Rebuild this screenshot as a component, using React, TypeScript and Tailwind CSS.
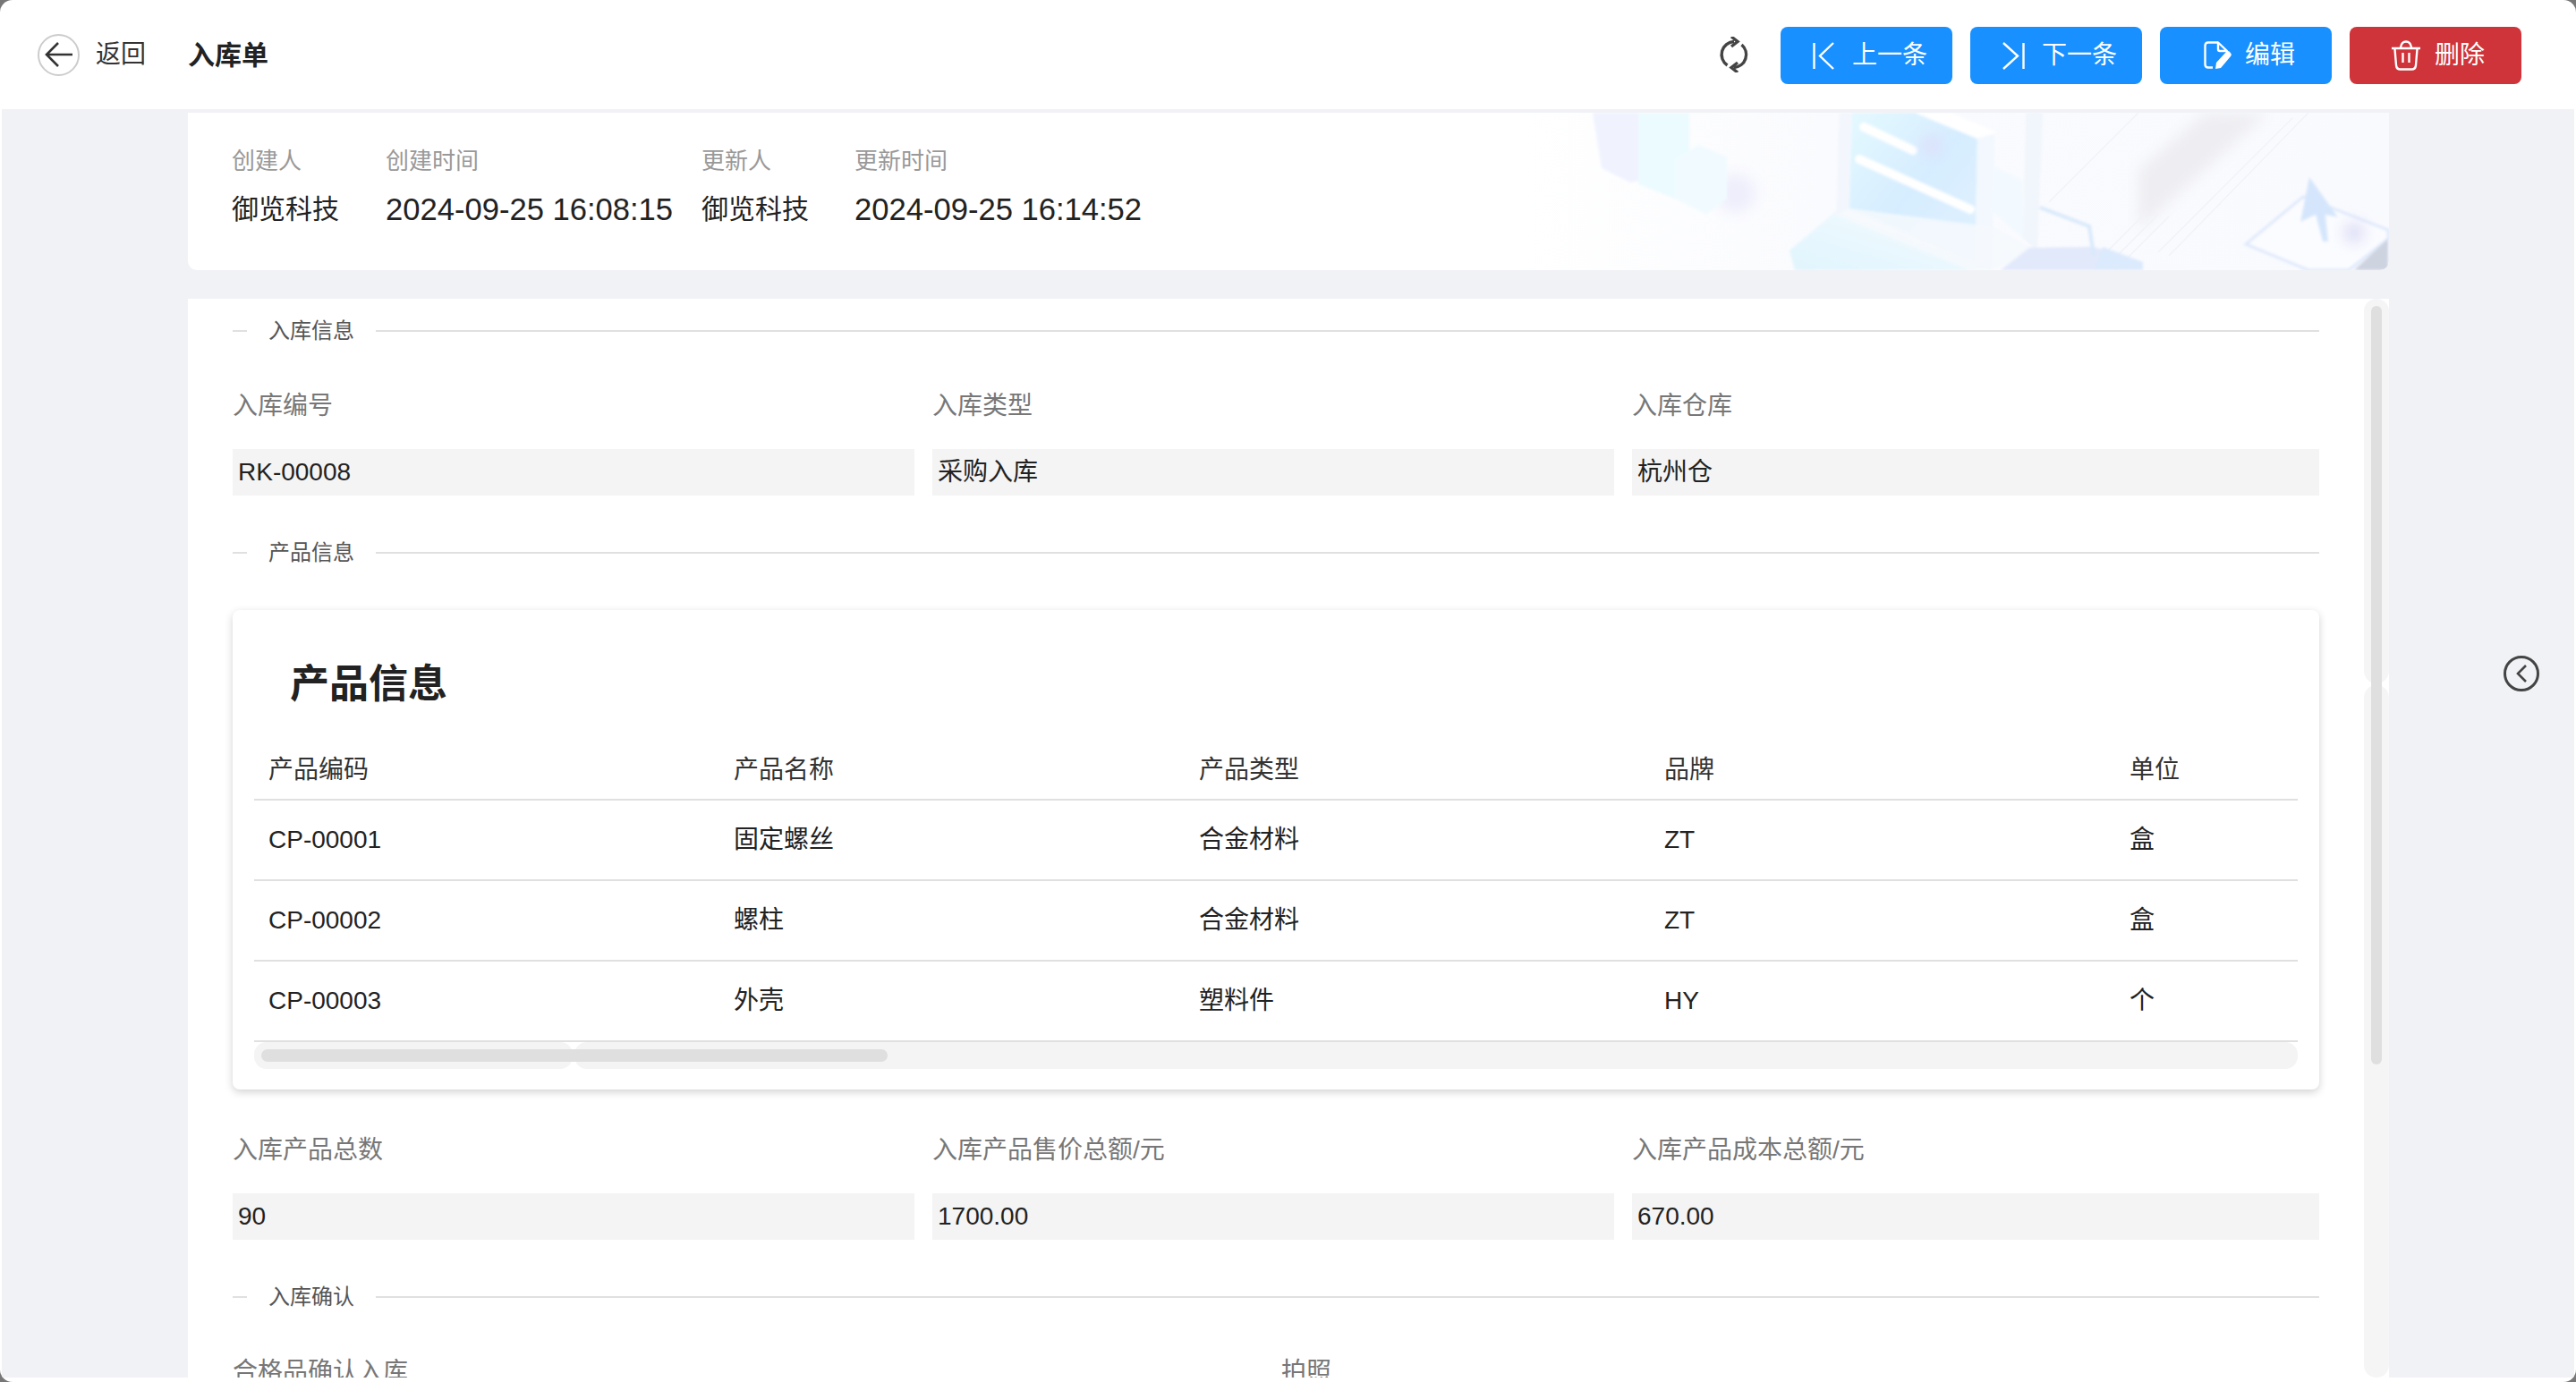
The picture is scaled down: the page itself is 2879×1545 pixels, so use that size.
import React from 'react'

const rows = [
  ['CP-00001', '固定螺丝', '合金材料', 'ZT', '盒'],
  ['CP-00002', '螺柱', '合金材料', 'ZT', '盒'],
  ['CP-00003', '外壳', '塑料件', 'HY', '个'],
]

function Section({ title }: { title: string }) {
  return (
    <div className="flex items-center h-[32px]">
      <div className="w-[16px] h-[2px] bg-[#e0e0e0]" />
      <span className="mx-[24px] text-[24px] text-[#555]">{title}</span>
      <div className="flex-1 h-[2px] bg-[#e0e0e0]" />
    </div>
  )
}

function Field({ label, value }: { label: string; value: string }) {
  return (
    <div>
      <div className="h-[40px] leading-[40px] text-[28px] text-[#777]">{label}</div>
      <div className="mt-[28px] h-[52px] leading-[52px] bg-[#f4f4f4] pl-[6px] text-[28px] text-[#222]">{value}</div>
    </div>
  )
}

function Meta({ label, value, date }: { label: string; value: string; date?: boolean }) {
  return (
    <div>
      <div className="h-[36px] leading-[36px] text-[26px] text-[#999]">{label}</div>
      <div className={date ? "mt-[16px] h-[40px] leading-[40px] text-[34.6px] text-[#222]" : "mt-[16px] h-[40px] leading-[40px] text-[30px] text-[#222]"}>{value}</div>
    </div>
  )
}

function HeroArt() {
  return (
    <svg className="absolute right-0 top-0" width="970" height="176" viewBox="0 0 970 176">
      <defs>
        <linearGradient id="base" x1="0" x2="1" y1="0" y2="0">
          <stop offset="0" stopColor="#ffffff" />
          <stop offset="0.35" stopColor="#fafbfe" />
          <stop offset="1" stopColor="#f9fafe" />
        </linearGradient>
        <linearGradient id="panel" x1="0" x2="1" y1="0" y2="1">
          <stop offset="0" stopColor="#e4f9ff" />
          <stop offset="0.5" stopColor="#d6edff" />
          <stop offset="1" stopColor="#e0f1ff" />
        </linearGradient>
        <linearGradient id="floor" x1="0" x2="1" y1="1" y2="0">
          <stop offset="0" stopColor="#e0f4fd" />
          <stop offset="1" stopColor="#f4fcff" />
        </linearGradient>
        <filter id="b2"><feGaussianBlur stdDeviation="1.4" /></filter>
        <filter id="b8"><feGaussianBlur stdDeviation="8" /></filter>
      </defs>
      <rect width="970" height="176" fill="url(#base)" />
      <g filter="url(#b8)">
        <polygon points="690,64 765,0 835,0 690,131" fill="#eeeef2" />
        <circle cx="240" cy="90" r="22" fill="#eeeefc" />
      </g>
      <g stroke="#f0f3f9" strokeWidth="1.5" fill="none">
        <path d="M712 156 L862 6 M724 160 L880 0 M590 100 L690 0" />
        <path d="M640 170 L700 110 M652 174 L712 114 M664 176 L724 116" />
      </g>
      <g filter="url(#b2)">
        <polygon points="80,0 131,0 131,76 122,78 90,62" fill="#f0f3fe" />
        <polygon points="131,0 188,0 188,96 172,96 131,80" fill="#ecfbff" />
        <polygon points="172,52 198,36 230,49 230,96 207,114 172,96" fill="#f1fbff" />
        <polygon points="300,154 351,111 510,170 512,176 306,176" fill="url(#floor)" />
        <polygon points="355,0 370,0 367,107 352,115" fill="#f3f7fd" />
        <polygon points="370,0 440,0 510,29 507,167 367,107" fill="url(#panel)" />
        <polygon points="440,0 480,0 532,22 510,29" fill="#ffffff" />
        <polygon points="510,29 529,24 526,176 507,176" fill="#f2f8fe" />
        <polygon points="564,0 583,0 577,155 561,140" fill="#f1f6fc" />
        <polygon points="529,60 561,76 561,140 526,110" fill="#f2faff" />
        <polygon points="352,115 367,107 530,128 577,155 577,160 520,176 500,176" fill="#f6f9fd" opacity="0.85" />
        <polygon points="536,176 568,151 640,150 695,167 695,176" fill="#e2e9fb" />
        <polygon points="640,176 650,150 695,167 695,176" fill="#dceafd" />
        <polyline points="580,106 635,127 640,160" fill="none" stroke="#d8e9fb" strokeWidth="4" />
        <line x1="383" y1="16" x2="438" y2="42" stroke="#ffffff" strokeWidth="10" strokeLinecap="round" />
        <line x1="378" y1="52" x2="502" y2="108" stroke="#ffffff" strokeWidth="10" strokeLinecap="round" />
        <polygon points="810,147 874,94 969,131 969,141 925,176 880,176" fill="#fbfcff" stroke="#dfe9fb" strokeWidth="3" />
        <polygon points="881,72 913,117 899,114 902,144 896,144 888,114 871,122" fill="#d5e6fc" />
        <polygon points="969,141 931,176 969,176" fill="#cdd3df" />
      </g>
      <g filter="url(#b8)">
        <circle cx="459" cy="37" r="12" fill="#dde0fb" />
        <circle cx="931" cy="134" r="12" fill="#dedef6" />
      </g>
    </svg>
  )
}

export default function App() {
  return (
    <div className="w-[2879px] h-[1545px] bg-[#777] font-['Liberation_Sans','Noto_Sans_CJK_SC',sans-serif]">
      <div className="relative flex flex-col h-full rounded-[14px] bg-white overflow-hidden pb-[5px]">
        {/* top bar */}
        <header className="h-[122px] shrink-0 flex items-center pl-[42px] pr-[61px]">
          <div className="w-[47px] h-[47px] rounded-full border-2 border-[#ccc] flex items-center justify-center">
            <svg width="32" height="28" viewBox="0 0 32 28" fill="none" stroke="#333" strokeWidth="2.6">
              <path d="M31 14 H2 M15 1 L2 14 L15 27" />
            </svg>
          </div>
          <span className="ml-[18px] text-[28px] text-[#333]">返回</span>
          <span className="ml-[47px] text-[30px] font-bold text-[#222]">入库单</span>
          <svg className="ml-auto mr-[32px]" width="40" height="40" viewBox="-20 -20 40 40" fill="none" stroke="#444" strokeWidth="3.4">
            <path d="M0 -14.5 A14.5 14.5 0 0 0 -7.5 12" />
            <path d="M8.5 -11 A14.5 14.5 0 0 1 0 14.5" />
            <path d="M-3 -20 L4 -14.5 L-3 -9" />
            <path d="M4 9 L-3 14.5 L4 20" />
          </svg>
          <div className="mt-[2px] flex gap-[20px] text-white text-[28px]">
            <button className="w-[192px] h-[64px] rounded-[8px] bg-[#1890ff] flex items-center pl-[36px]">
              <svg width="24" height="31" viewBox="0 0 24 31" fill="none" stroke="#fff" strokeWidth="2.4">
                <path d="M1.5 1 V30 M23 1 L8 15.5 L23 30" />
              </svg>
              <span className="ml-[20px]">上一条</span>
            </button>
            <button className="w-[192px] h-[64px] rounded-[8px] bg-[#1890ff] flex items-center pl-[36px]">
              <svg width="25" height="31" viewBox="0 0 25 31" fill="none" stroke="#fff" strokeWidth="2.4">
                <path d="M1 1 L17 15.5 L1 30 M23.5 1 V30" />
              </svg>
              <span className="ml-[19px]">下一条</span>
            </button>
            <button className="w-[192px] h-[64px] rounded-[8px] bg-[#1890ff] flex items-center pl-[49px]">
              <svg width="32" height="32" viewBox="0 0 32 32" fill="none" stroke="#fff" strokeWidth="2.4">
                <path d="M16 1.5 H5 Q1.5 1.5 1.5 5 V26 Q1.5 29.5 5 29.5 H10" />
                <path d="M16 1.5 V9 Q16 11 18 11 H26 L16 1.5 Z" strokeLinejoin="round" />
                <path d="M13 31 L14 24 L25 12 Q27 10 29 12 L30.5 14 Q31.5 15.5 30 17 L19 30 Z" fill="#fff" stroke="none" />
              </svg>
              <span className="ml-[14px]">编辑</span>
            </button>
            <button className="w-[192px] h-[64px] rounded-[8px] bg-[#cf343a] flex items-center pl-[46px]">
              <svg width="34" height="34" viewBox="0 0 34 34" fill="none" stroke="#fff" strokeWidth="2.4">
                <path d="M11 8 Q12 1.5 17 1.5 Q22 1.5 23 8 M1 9 H33" />
                <path d="M4.5 10 L6 28 Q6.5 32.5 10.5 32.5 H23.5 Q27.5 32.5 28 28 L29.5 10" />
                <path d="M13.5 14 V25 M20.5 14 V25" />
              </svg>
              <span className="ml-[15px]">删除</span>
            </button>
          </div>
        </header>

        {/* page body */}
        <main className="relative flex-1 min-h-0 mx-[2px] pt-[4px] pl-[208px] pr-[207px] bg-[#f0f2f6] flex flex-col gap-[32px]">
          <section className="relative h-[176px] shrink-0 bg-white rounded-b-[10px] overflow-hidden">
            <div className="relative pt-[36px] pl-[49px] grid grid-cols-[172px_353px_171px_auto]">
              <Meta label="创建人" value="御览科技" />
              <Meta label="创建时间" value="2024-09-25 16:08:15" date />
              <Meta label="更新人" value="御览科技" />
              <Meta label="更新时间" value="2024-09-25 16:14:52" date />
            </div>
            <HeroArt />
          </section>

          <section className="relative flex-1 min-h-0 bg-white overflow-hidden pt-[20px] pl-[50px] pr-[78px]">
            <Section title="入库信息" />
            <div className="mt-[48px] grid grid-cols-[762px_762px_768px] gap-x-[20px]">
              <Field label="入库编号" value="RK-00008" />
              <Field label="入库类型" value="采购入库" />
              <Field label="入库仓库" value="杭州仓" />
            </div>
            <div className="mt-[48px]"><Section title="产品信息" /></div>

            <div className="mt-[48px] h-[536px] rounded-[8px] bg-white px-[24px] pt-[53px] shadow-[0_3px_10px_rgba(0,0,0,0.18)]">
              <h3 className="pl-[40px] h-[60px] leading-[60px] text-[44px] font-bold text-[#222]">产品信息</h3>
              <div className="mt-[34px] h-[66px] grid grid-cols-[520px_520px_520px_520px_auto] items-center border-b-2 border-[#e0e0e0] pl-[16px] text-[28px] text-[#333]">
                <span>产品编码</span>
                <span>产品名称</span>
                <span>产品类型</span>
                <span>品牌</span>
                <span>单位</span>
              </div>
              {rows.map((r) => (
                <div key={r[0]} className="h-[90px] grid grid-cols-[520px_520px_520px_520px_auto] items-center border-b-2 border-[#e0e0e0] pl-[16px] text-[28px] text-[#222]">
                  {r.map((c, i) => <span key={i}>{c}</span>)}
                </div>
              ))}
              <div className="relative h-[30px] flex gap-[2px]">
                <div className="w-[356px] bg-[#f4f4f4] rounded-[14px]" />
                <div className="flex-1 bg-[#f4f4f4] rounded-[14px]" />
                <div className="absolute left-[8px] top-[8px] w-[700px] h-[14px] rounded-full bg-[#dfdfdf]" />
              </div>
            </div>

            <div className="mt-[48px] grid grid-cols-[762px_762px_768px] gap-x-[20px]">
              <Field label="入库产品总数" value="90" />
              <Field label="入库产品售价总额/元" value="1700.00" />
              <Field label="入库产品成本总额/元" value="670.00" />
            </div>
            <div className="mt-[48px]"><Section title="入库确认" /></div>
            <div className="mt-[48px] grid grid-cols-2 text-[28px] text-[#777] h-[40px] leading-[40px]">
              <span>合格品确认入库</span>
              <span className="pl-[6px]">拍照</span>
            </div>

            {/* vertical scrollbar */}
            <div className="absolute right-0 top-0 bottom-0 w-[28px] flex flex-col gap-[2px]">
              <div className="h-[430px] bg-[#f5f5f5] rounded-[14px]" />
              <div className="flex-1 bg-[#f5f5f5] rounded-[14px]" />
              <div className="absolute left-[8px] top-[8px] w-[12px] h-[848px] rounded-full bg-[#dfdfdf]" />
            </div>
          </section>

          <button className="absolute left-[2796px] top-[611px] w-[40px] h-[40px] rounded-full border-[3px] border-[#444] flex items-center justify-center">
            <svg width="14" height="22" viewBox="0 0 14 22" fill="none" stroke="#444" strokeWidth="2.6">
              <path d="M12 2 L3 11 L12 20" />
            </svg>
          </button>
        </main>
      </div>
    </div>
  )
}
